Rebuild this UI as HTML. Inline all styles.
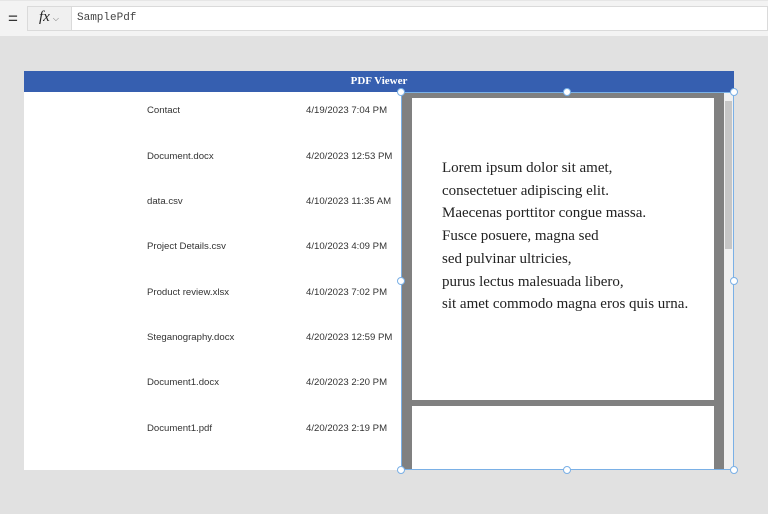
<!DOCTYPE html>
<html><head><style>
*{margin:0;padding:0;box-sizing:border-box}
body{width:768px;height:514px;background:#e1e1e1;position:relative;overflow:hidden;font-family:"Segoe UI","Liberation Sans",sans-serif}
.top{position:absolute;left:0;top:0;width:768px;height:36px;background:#f3f3f3;border-top:1px solid #e6e6e6}
.eq{position:absolute;left:8px;top:9px;font-size:17px;color:#333}
.fx{position:absolute;left:27px;top:6px;width:45px;height:25px;background:#f0f0f0;border:1px solid #dadada;font-family:"Liberation Serif",serif;font-style:italic;font-size:15px;padding:2px 0 0 11px;color:#222}
.fx span{font-style:normal;font-family:"Liberation Sans";font-size:8px;color:#666;margin-left:3px}
.inp{position:absolute;left:71px;top:6px;width:697px;height:25px;background:#fff;border:1px solid #dadada;font-family:"Liberation Mono",monospace;font-size:11px;color:#444;padding:5px 0 0 5px}
.hdr{position:absolute;left:24px;top:71px;width:710px;height:21px;background:#365fb0;color:#fff;font-family:"Liberation Serif",serif;font-weight:bold;font-size:11px;text-align:center;line-height:21px}
.body{position:absolute;left:24px;top:92px;width:710px;height:378px;background:#fff}
.row{position:absolute;font-size:9.6px;color:#333;margin-top:2px}
.pdf{position:absolute;left:401px;top:92px;width:333px;height:378px;background:#808080;border:1px solid #7ab0e6;overflow:hidden}
.pg{position:absolute;left:10px;width:302px;background:#fff}
.sb{position:absolute;right:0;top:0;width:9px;height:100%;background:#f0f0f0}
.th{position:absolute;left:1px;top:8px;width:7px;height:148px;background:#c6c6c6}
.txt{font-family:"Liberation Serif",serif;font-size:15px;line-height:22.7px;color:#222;padding:59px 0 0 30px}
.h{position:absolute;width:8px;height:8px;border-radius:50%;background:#fff;border:1.5px solid #7ab0e6}
</style></head><body>
<div class="top"></div>
<div class="eq">=</div>
<div class="fx">fx<span>⌵</span></div>
<div class="inp">SamplePdf</div>
<div class="hdr">PDF Viewer</div>
<div class="body"></div>
<div class="row" style="left:147px;top:103px">Contact</div><div class="row" style="left:306px;top:103px">4/19/2023 7:04 PM</div>
<div class="row" style="left:147px;top:149px">Document.docx</div><div class="row" style="left:306px;top:149px">4/20/2023 12:53 PM</div>
<div class="row" style="left:147px;top:194px">data.csv</div><div class="row" style="left:306px;top:194px">4/10/2023 11:35 AM</div>
<div class="row" style="left:147px;top:239px">Project Details.csv</div><div class="row" style="left:306px;top:239px">4/10/2023 4:09 PM</div>
<div class="row" style="left:147px;top:285px">Product review.xlsx</div><div class="row" style="left:306px;top:285px">4/10/2023 7:02 PM</div>
<div class="row" style="left:147px;top:330px">Steganography.docx</div><div class="row" style="left:306px;top:330px">4/20/2023 12:59 PM</div>
<div class="row" style="left:147px;top:375px">Document1.docx</div><div class="row" style="left:306px;top:375px">4/20/2023 2:20 PM</div>
<div class="row" style="left:147px;top:421px">Document1.pdf</div><div class="row" style="left:306px;top:421px">4/20/2023 2:19 PM</div>
<div class="pdf">
<div class="pg" style="top:5px;height:302px"><div class="txt">Lorem ipsum dolor sit amet,<br>consectetuer adipiscing elit.<br>Maecenas porttitor congue massa.<br>Fusce posuere, magna sed<br>sed pulvinar ultricies,<br>purus lectus malesuada libero,<br>sit amet commodo magna eros quis urna.</div></div>
<div class="pg" style="top:313px;height:80px"></div>
<div class="sb"><div class="th"></div></div>
</div>
<div class="h" style="left:397px;top:88px"></div>
<div class="h" style="left:563px;top:88px"></div>
<div class="h" style="left:730px;top:88px"></div>
<div class="h" style="left:397px;top:277px"></div>
<div class="h" style="left:730px;top:277px"></div>
<div class="h" style="left:397px;top:466px"></div>
<div class="h" style="left:563px;top:466px"></div>
<div class="h" style="left:730px;top:466px"></div>
</body></html>
